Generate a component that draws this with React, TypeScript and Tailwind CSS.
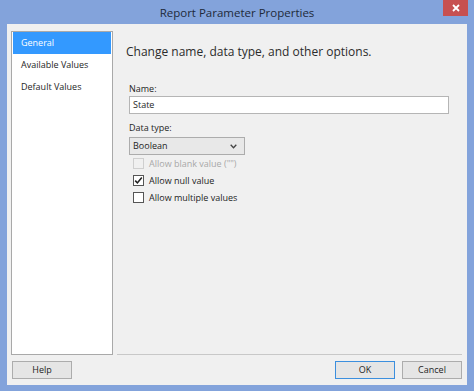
import React, { useState } from 'react';

const FONT = { fontFamily: '"Open Sans", "Noto Sans", "Liberation Sans", sans-serif' };

function CheckBox({ checked, disabled, label, onToggle }: { checked: boolean; disabled?: boolean; label: string; onToggle?: () => void }) {
  return (
    <div className="flex items-center h-[17px] cursor-default" onClick={disabled ? undefined : onToggle}>
      <div
        className={`w-[11px] h-[11px] border flex items-center justify-center ${
          disabled ? 'border-[#cfcfcf] bg-[#f0f0f0]' : 'border-[#555] bg-white'
        }`}
      >
        {checked && (
          <svg width="9" height="9" viewBox="0 0 9 9">
            <path d="M1.2 4.6 L3.4 6.9 L7.8 1.6" fill="none" stroke="#222" strokeWidth="1.6" />
          </svg>
        )}
      </div>
      <span className={`ml-[5px] text-[9px] ${disabled ? 'text-[#a8a8a8]' : 'text-[#1e1e1e]'}`}>{label}</span>
    </div>
  );
}

export default function App() {
  const [tab, setTab] = useState('General');
  const [allowNull, setAllowNull] = useState(true);
  const [allowMulti, setAllowMulti] = useState(false);

  const tabs = ['General', 'Available Values', 'Default Values'];

  return (
    <div className="w-[474px] h-[391px] bg-[#83a3db] flex flex-col" style={FONT}>
      {/* title bar */}
      <div className="h-[24px] flex items-start relative">
        <div className="flex-1 text-center text-[11.5px] leading-[26px] text-[#1e2a3a]">Report Parameter Properties</div>
        <div className="absolute right-[6px] top-0 w-[25px] h-[16px] bg-[#c75050] flex items-center justify-center">
          <svg width="8" height="8" viewBox="0 0 8 8">
            <path d="M1 1 L7 7 M7 1 L1 7" stroke="white" strokeWidth="1.8" />
          </svg>
        </div>
      </div>

      {/* client area */}
      <div className="mx-[7px] h-[361px] bg-[#f0f0f0] flex flex-col">
        <div className="flex pt-[7px] pl-[4px] pr-[5px] h-[331px]">
          {/* page list */}
          <div className="w-[102px] h-[324px] bg-white border border-[#a9a9a9] px-px">
            {tabs.map((t) => (
              <div
                key={t}
                onClick={() => setTab(t)}
                className={`h-[22px] pl-[8px] text-[9px] leading-[21px] cursor-default ${
                  tab === t ? 'bg-[#3399ff] text-white' : 'text-[#1e1e1e]'
                }`}
              >
                {t}
              </div>
            ))}
          </div>

          {/* content pane */}
          <div className="flex-1 ml-[4px] flex flex-col border-b border-[#c8c8c8]">
            <div className="pl-[9px] pt-[13px] text-[12px] text-[#2b2b2b] leading-[16px]">
              Change name, data type, and other options.
            </div>

            <div className="pl-[12px] pr-[13px] mt-[22px]">
              <div className="text-[9px] text-[#1e1e1e] leading-[13px]">Name:</div>
              <div className="mt-[1px] h-[18px] bg-white border border-[#b5b5b5] px-[3px] text-[9px] leading-[16px] text-[#1e1e1e]">
                State
              </div>

              <div className="mt-[7px] text-[9px] text-[#1e1e1e] leading-[13px]">Data type:</div>
              <div className="mt-[3px] w-[116px] h-[18px] bg-[#e8e8e8] border border-[#acacac] flex items-center justify-between pl-[3px] pr-[7px]">
                <span className="text-[9px] text-[#1e1e1e]">Boolean</span>
                <svg width="7" height="5" viewBox="0 0 7 5">
                  <path d="M0.7 0.8 L3.5 3.8 L6.3 0.8" fill="none" stroke="#444" strokeWidth="1.3" />
                </svg>
              </div>

              <div className="pl-[4px] flex flex-col">
                <CheckBox checked={false} disabled label='Allow blank value ("")' />
                <CheckBox checked={allowNull} label="Allow null value" onToggle={() => setAllowNull(!allowNull)} />
                <CheckBox checked={allowMulti} label="Allow multiple values" onToggle={() => setAllowMulti(!allowMulti)} />
              </div>
            </div>
          </div>
        </div>

        {/* buttons */}
        <div className="flex items-center pt-[6px] pl-[5px] pr-[5px]">
          <button className="w-[60px] h-[18px] bg-[#e5e5e5] border border-[#acacac] text-[9px] text-[#1e1e1e]">Help</button>
          <div className="flex-1" />
          <button className="w-[60px] h-[18px] bg-[#e5e5e5] border border-[#3c8fde] text-[9px] text-[#1e1e1e]">OK</button>
          <button className="ml-[7px] w-[60px] h-[18px] bg-[#e5e5e5] border border-[#acacac] text-[9px] text-[#1e1e1e]">Cancel</button>
        </div>
      </div>
    </div>
  );
}
